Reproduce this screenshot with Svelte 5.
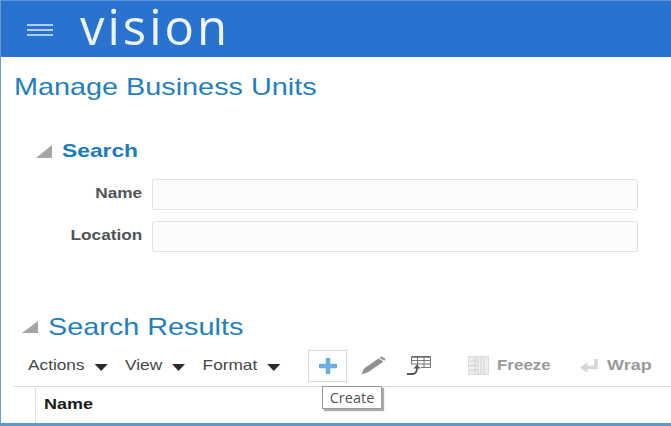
<script lang="ts">
    const fields = ["Name", "Location"];
    const menus = ["Actions", "View", "Format"];
</script>

<div class="page">
    <header class="brand-bar">
        <svg class="hamburger" width="26" height="14" viewBox="0 0 26 14" aria-hidden="true">
            <path d="M0 2h26M0 7h26M0 12h26" stroke="#dce9f8" stroke-width="1.6" fill="none" />
        </svg>
        <span class="logo">vision</span>
    </header>

    <main class="content">
        <h1 class="page-title"><span class="wide">Manage Business Units</span></h1>

        <section class="search">
            <h2 class="search-title">
                <svg width="16" height="13" viewBox="0 0 16 13" aria-hidden="true">
                    <path d="M16 0v13H0z" fill="#a3a5a7" />
                </svg>
                <span class="wide">Search</span>
            </h2>
            <div class="form">
                {#each fields as field}
                    <label class="field">
                        <span class="field-label"><span class="wide wide-right">{field}</span></span>
                        <span class="field-input"></span>
                    </label>
                {/each}
            </div>
        </section>

        <section class="results">
            <h2 class="results-title">
                <svg width="16" height="12" viewBox="0 0 16 12" aria-hidden="true">
                    <path d="M16 0v12H0z" fill="#a3a5a7" />
                </svg>
                <span class="wide">Search Results</span>
            </h2>

            <div class="toolbar">
                <div class="menu-slot">
                    <div class="menus">
                        {#each menus as menu}
                            <span class="menu">
                                <span class="menu-text">{menu}</span>
                                <svg width="11" height="7" viewBox="0 0 11 7" aria-hidden="true">
                                    <path d="M0 0h11L5.500 7z" fill="#2b2b2b" />
                                </svg>
                            </span>
                        {/each}
                    </div>
                </div>

                <button type="button" class="create" aria-label="Create">
                    <svg width="20" height="20" viewBox="0 0 20 20" aria-hidden="true">
                        <path d="M10 2v16M1 10h18" stroke="#6aaee0" stroke-width="4.5" fill="none" />
                    </svg>
                    <span class="tooltip">Create</span>
                </button>

                <svg class="edit" width="25" height="19" viewBox="0 0 25 19" aria-hidden="true">
                    <path d="M0.500 18.500l2.500-6L17.500 2.500l5 3L7.500 16z" fill="#8e9092" />
                    <path d="M18.500 1.800l1.800-1.300 4.500 2.500-1.500 1.700z" fill="#8e9092" />
                </svg>

                <svg class="detach" width="24" height="19" viewBox="0 0 24 19" aria-hidden="true">
                    <path d="M4.500 1h19v10.500h-10M4.500 1v7.500M4.500 4.500h19M4.500 8h19M10.500 1v10.500M17 1v10.500" stroke="#77797b" stroke-width="1.100" fill="none" />
                    <path d="M4.500 0.700h19" stroke="#66686a" stroke-width="1.400" fill="none" />
                    <path d="M0 18h5.500c3 0 4.500-1.500 4.500-6" stroke="#55585a" stroke-width="1.800" fill="none" />
                    <path d="M6.500 12.500h7L10 8.500z" fill="#55585a" />
                </svg>

                <span class="tool freeze">
                    <svg width="21" height="19" viewBox="0 0 21 19" aria-hidden="true">
                        <rect x="0.500" y="0.500" width="20" height="18" fill="#eeeeee" stroke="#dcdcdc" />
                        <path d="M7 1v17M10 1v17M13 1v17M16 1v17M1 5h8M1 9.500h8M1 14h8" stroke="#d2d2d2" fill="none" />
                    </svg>
                    <span class="wide tool-text">Freeze</span>
                </span>

                <span class="tool wrap">
                    <svg width="19" height="16" viewBox="0 0 19 16" aria-hidden="true">
                        <path d="M16 1v8.500H6" stroke="#d6d6d6" stroke-width="3.500" fill="none" />
                        <path d="M7.500 4v11L0 9.500z" fill="#d6d6d6" />
                    </svg>
                    <span class="wide tool-text wrap-text">Wrap</span>
                </span>
            </div>

            <div class="table-head">
                <span class="name-col"><span class="wide">Name</span></span>
            </div>
        </section>
    </main>
</div>

<style>
    :global(body) {
        margin: 0;
        background: #fff;
    }

    .page {
        width: 671px;
        height: 426px;
        box-sizing: border-box;
        overflow: hidden;
        display: flex;
        flex-direction: column;
        border-left: 1px solid #6c9bc6;
        border-bottom: 3px solid #5b96cf;
        font-family: "Liberation Sans", Arial, sans-serif;
    }

    /* the whole capture is stretched sideways, so text is widened to match */
    .wide {
        display: inline-block;
        transform: scaleX(1.2);
        transform-origin: left center;
    }

    .wide-right {
        transform: scaleX(1.23);
        transform-origin: right center;
    }

    .brand-bar {
        flex: none;
        height: 57px;
        box-sizing: border-box;
        display: flex;
        align-items: center;
        gap: 27px;
        padding: 0 0 4px 26px;
        background: #2a72cf;
        border-top: 1px solid #5b96d8;
    }

    .hamburger {
        margin-top: 5px;
    }

    .logo {
        font-family: "Open Sans", "Noto Sans", sans-serif;
        font-size: 49px;
        line-height: 50px;
        color: #eef5fc;
        letter-spacing: 3px;
        margin-top: -3px;
    }

    .content {
        flex: 1;
        min-height: 0;
        display: flex;
        flex-direction: column;
    }

    .page-title {
        margin: 15px 0 0 13px;
        font-size: 24px;
        line-height: 30px;
        font-weight: 400;
        color: #1f7fc0;
    }

    .search {
        margin: 37px 0 0 33px;
    }

    .search-title {
        display: flex;
        align-items: center;
        gap: 10px;
        margin: 0;
        padding-left: 2px;
        font-size: 19px;
        line-height: 24px;
        font-weight: 700;
        color: #1b7cc2;
    }

    .form {
        display: flex;
        flex-direction: column;
        gap: 11px;
        margin-top: 16px;
    }

    .field {
        display: flex;
        align-items: center;
        gap: 10px;
    }

    .field-label {
        width: 108px;
        text-align: right;
        font-size: 14px;
        font-weight: 700;
        color: #515456;
        margin-top: -4px;
    }

    .field-input {
        width: 486px;
        height: 31px;
        box-sizing: border-box;
        background: #fbfcfe;
        border: 1px solid #e0e4e8;
        border-radius: 2px;
    }

    .results {
        flex: 1;
        min-height: 0;
        margin-top: 61px;
        display: flex;
        flex-direction: column;
    }

    .results-title {
        display: flex;
        align-items: center;
        gap: 10px;
        margin: 0 0 0 21px;
        font-size: 24px;
        line-height: 28px;
        font-weight: 400;
        color: #1f7fc0;
    }

    .toolbar {
        display: flex;
        align-items: center;
        height: 33px;
        margin-top: 8px;
        padding-left: 27px;
    }

    .menu-slot {
        width: 280px;
    }

    .menus {
        display: flex;
        gap: 15px;
        transform: scaleX(1.19);
        transform-origin: left center;
    }

    .menu {
        display: flex;
        align-items: center;
        gap: 8px;
        font-size: 14.500px;
        color: #444648;
    }

    .menu-text {
        margin-top: -2px;
    }

    .menu svg {
        margin-top: 4px;
    }

    .create {
        position: relative;
        width: 39px;
        height: 32px;
        padding: 0;
        display: flex;
        align-items: center;
        justify-content: center;
        background: #fff;
        border: 1px solid #cfdce6;
    }

    .tooltip {
        position: absolute;
        left: 13px;
        top: 35px;
        width: 60px;
        height: 23px;
        box-sizing: border-box;
        text-align: center;
        font-family: "Open Sans", "Noto Sans", sans-serif;
        font-size: 14.500px;
        line-height: 21px;
        color: #555;
        background: #fff;
        border: 1px solid #9a9a9a;
        box-shadow: 2px 2px 1px #aaaaaa;
        z-index: 2;
    }

    .edit {
        margin-left: 14px;
    }

    .detach {
        margin-left: 21px;
    }

    .tool {
        display: flex;
        align-items: center;
        gap: 8px;
        font-size: 14.500px;
        font-weight: 700;
        color: #9a9a9a;
    }

    .tool-text {
        margin-top: -2px;
        transform: scaleX(1.17);
    }

    .wrap-text {
        transform: scaleX(1.24);
    }

    .freeze {
        margin-left: 37px;
    }

    .wrap {
        margin-left: 37px;
    }

    .table-head {
        flex: 1;
        margin: 4px 0 0 12px;
        padding-left: 22px;
        border-top: 1px solid #d8dfe5;
    }

    .name-col {
        display: block;
        height: 100%;
        padding: 8px 0 0 8px;
        box-sizing: border-box;
        border-left: 1px solid #dfe2e5;
        font-size: 15px;
        font-weight: 700;
        color: #1a1a1a;
    }
</style>
